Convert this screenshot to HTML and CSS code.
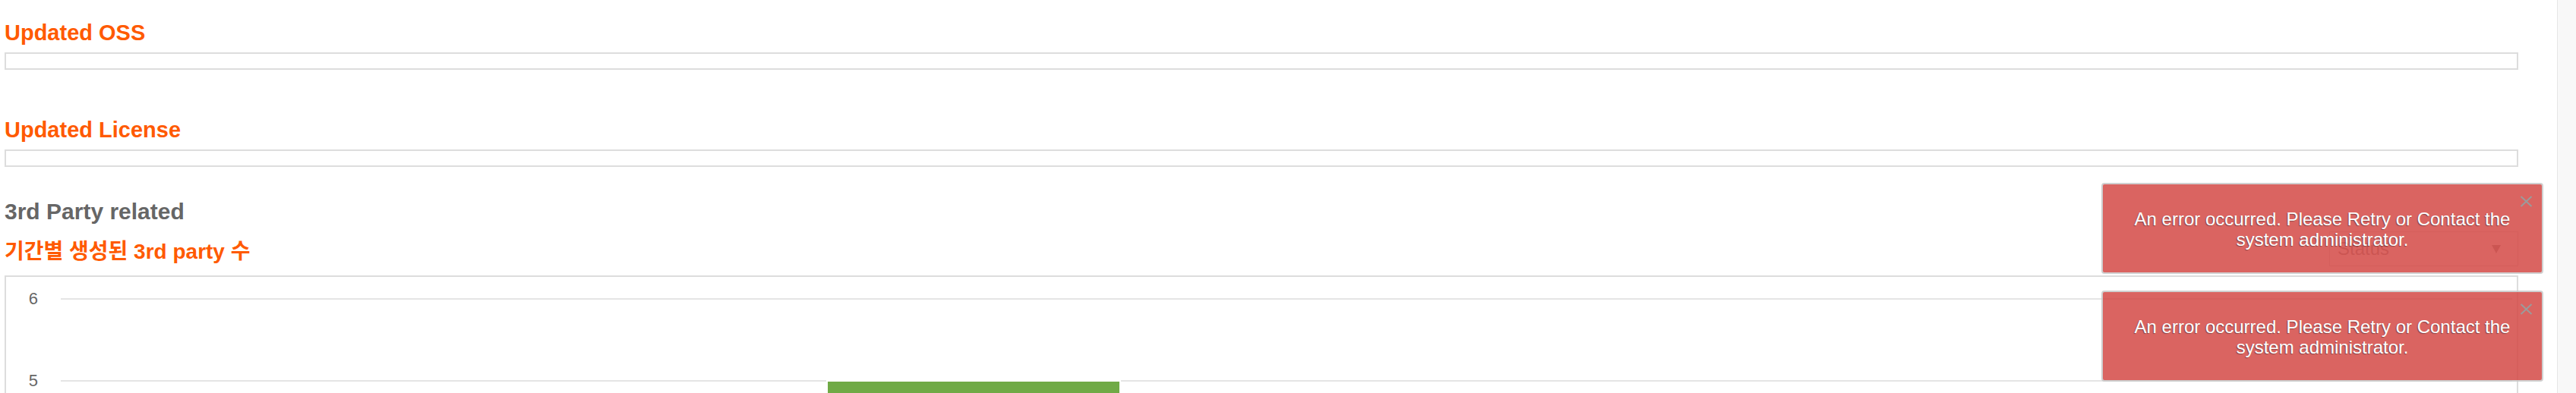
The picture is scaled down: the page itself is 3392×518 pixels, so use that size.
FILE: index.html
```html
<!DOCTYPE html>
<html lang="ko">
<head>
<meta charset="utf-8">
<title>Dashboard</title>
<link rel="stylesheet" href="styles.css">
</head>
<body>
<div class="page">
  <main class="content">
    <section class="block">
      <h3 class="sub-title">Updated OSS</h3>
      <div class="empty-box"></div>
    </section>
    <section class="block block-license">
      <h3 class="sub-title">Updated License</h3>
      <div class="empty-box"></div>
    </section>
    <section class="group">
      <h2 class="group-title">3rd Party related</h2>
      <div class="chart-head">
        <h3 class="sub-title chart-title">기간별 생성된 3rd party 수</h3>
        <div class="select"><span class="select-text">Status</span><span class="caret"></span></div>
      </div>
      <div class="chart">
        <div class="tick"><span class="tick-label">6</span><span class="tick-line"></span></div>
        <div class="tick tick-next"><span class="tick-label">5</span><span class="tick-line"></span></div>
        <div class="bars"><div class="bar"></div></div>
      </div>
    </section>
  </main>
  <div class="scrollbar"></div>
</div>
<div class="toast-container">
  <div class="toast">
    <button class="toast-close" type="button" aria-label="close">
      <svg width="17" height="15" viewBox="0 0 17 15"><path d="M1.5 1 L15.5 14 M15.5 1 L1.5 14" stroke="#8a8a8a" stroke-width="2" fill="none"/></svg>
    </button>
    <div class="toast-message">An error occurred. Please Retry or Contact the system administrator.</div>
  </div>
  <div class="toast">
    <button class="toast-close" type="button" aria-label="close">
      <svg width="17" height="15" viewBox="0 0 17 15"><path d="M1.5 1 L15.5 14 M15.5 1 L1.5 14" stroke="#8a8a8a" stroke-width="2" fill="none"/></svg>
    </button>
    <div class="toast-message">An error occurred. Please Retry or Contact the system administrator.</div>
  </div>
</div>
</body>
</html>
```

FILE: styles.css
```css
html, body {
  margin: 0;
  padding: 0;
  height: 518px;
  overflow: hidden;
  background: #fff;
}

body {
  font-family: "Liberation Sans", "Noto Sans CJK KR", sans-serif;
}

.page {
  display: flex;
  height: 518px;
}

.content {
  flex: 1;
  min-width: 0;
  padding: 27px 51px 0 6px;
}

.sub-title {
  margin: 0;
  font-size: 29px;
  line-height: 32px;
  font-weight: bold;
  color: #ff5a00;
}

.empty-box {
  margin-top: 10px;
  height: 19px;
  border: 2px solid #dddddd;
}

.block-license {
  margin-top: 63px;
}

.group {
  margin-top: 43px;
}

.group-title {
  margin: 0;
  font-size: 30px;
  line-height: 32px;
  font-weight: bold;
  color: #666666;
}

.chart-head {
  margin-top: 10px;
  display: flex;
  align-items: flex-end;
  justify-content: space-between;
}

.chart-title {
  margin-bottom: 3px;
  font-size: 28px;
}

.select {
  box-sizing: border-box;
  width: 249px;
  height: 46px;
  border: 1px solid #dddddd;
  padding: 0 22px 0 10px;
  display: flex;
  align-items: center;
  justify-content: space-between;
  font-size: 24px;
  color: #999999;
}

.caret {
  width: 0;
  height: 0;
  border-left: 6.5px solid transparent;
  border-right: 6.5px solid transparent;
  border-top: 11px solid #999999;
}

.chart {
  margin-top: 12px;
  height: 300px;
  border: 2px solid #dddddd;
  border-bottom: none;
  padding-right: 6px;
}

.tick {
  display: flex;
  align-items: center;
  height: 0;
  margin-top: 29px;
}

.tick-next {
  margin-top: 108px;
}

.tick-label {
  width: 42px;
  margin-right: 30px;
  text-align: right;
  font-size: 22px;
  line-height: 22px;
  color: #666666;
}

.tick-line {
  flex: 1;
  height: 2px;
  background: #e5e5e5;
}

.bars {
  display: flex;
  margin-top: -1px;
}

.bar {
  margin-left: 1080px;
  width: 384px;
  height: 200px;
  border: 2px solid #ffffff;
  border-bottom: none;
  background: #70aa46;
}

.scrollbar {
  width: 24px;
  border-left: 1px solid #e6e6e6;
  background: #f8f8f8;
}

.toast-container {
  position: fixed;
  top: 241px;
  right: 43px;
  width: 582px;
}

.toast {
  position: relative;
  box-sizing: border-box;
  width: 582px;
  height: 120px;
  margin-bottom: 22px;
  padding: 32px 30px 30px;
  border: 2px solid #c8c8c8;
  border-radius: 4px;
  background: #d44946;
  opacity: 0.85;
  color: #ffffff;
  font-size: 24px;
  line-height: 27px;
  text-align: center;
  text-shadow: -1px 1px 1px rgba(0, 0, 0, 0.45);
}

.toast-close {
  position: absolute;
  top: 15px;
  right: 12px;
  padding: 0;
  margin: 0;
  border: none;
  background: none;
  width: 17px;
  height: 15px;
  line-height: 0;
}

.toast-close svg {
  display: block;
}
```
